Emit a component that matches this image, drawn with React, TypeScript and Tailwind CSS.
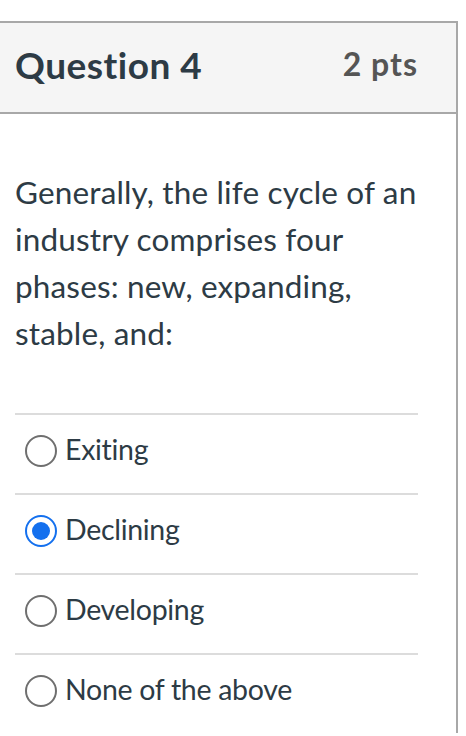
import React from "react";

const answers = [
  { label: "Exiting", checked: false },
  { label: "Declining", checked: true },
  { label: "Developing", checked: false },
  { label: "None of the above", checked: false },
];

function Radio({ checked }: { checked: boolean }) {
  if (checked) {
    return (
      <div className="w-[32px] h-[32px] rounded-full border-[2px] border-[#1470ee] flex items-center justify-center shrink-0">
        <div className="w-[18px] h-[18px] rounded-full bg-[#1470ee]" />
      </div>
    );
  }
  return <div className="w-[32px] h-[32px] rounded-full border-[2px] border-[#6f6f6f] shrink-0" />;
}

export default function App() {
  return (
    <div className="bg-white min-h-[736px] pt-[21px] overflow-hidden" style={{ fontFamily: "Lato, 'Noto Sans', sans-serif" }}>
      <div className="w-[458px] border-t-[2px] border-r-[2px] border-[#a8a8a8]">
        <div className="h-[91px] bg-[#f5f5f5] border-b-[2px] border-[#a8a8a8] flex items-center justify-between pl-[15px] pr-[38px]">
          <div className="text-[37px] font-bold text-[#2d3b45] leading-none tracking-[0.5px] pb-[7px]">Question 4</div>
          <div className="text-[32px] font-bold text-[#555555] leading-none tracking-[1px] pb-[7px]">2 pts</div>
        </div>
        <div className="pl-[15px] pr-[38px] pt-[55px]">
          <p className="text-[31.5px] leading-[47px] text-[#2d3b45] tracking-[0.15px] -mr-[12px]">
            Generally, the life cycle of an industry comprises four phases: new, expanding, stable, and:
          </p>
          <div className="mt-[56px]">
            {answers.map((a) => (
              <div key={a.label} className="border-t-[2px] border-[#dcdcdc] pt-[13px] pb-[23px] flex items-start">
                <div className="pl-[10px] pr-[8px] pt-[7px]">
                  <Radio checked={a.checked} />
                </div>
                <span className="text-[28.5px] leading-[42px] text-[#2d3b45] tracking-[-0.3px]">{a.label}</span>
              </div>
            ))}
          </div>
        </div>
      </div>
    </div>
  );
}
